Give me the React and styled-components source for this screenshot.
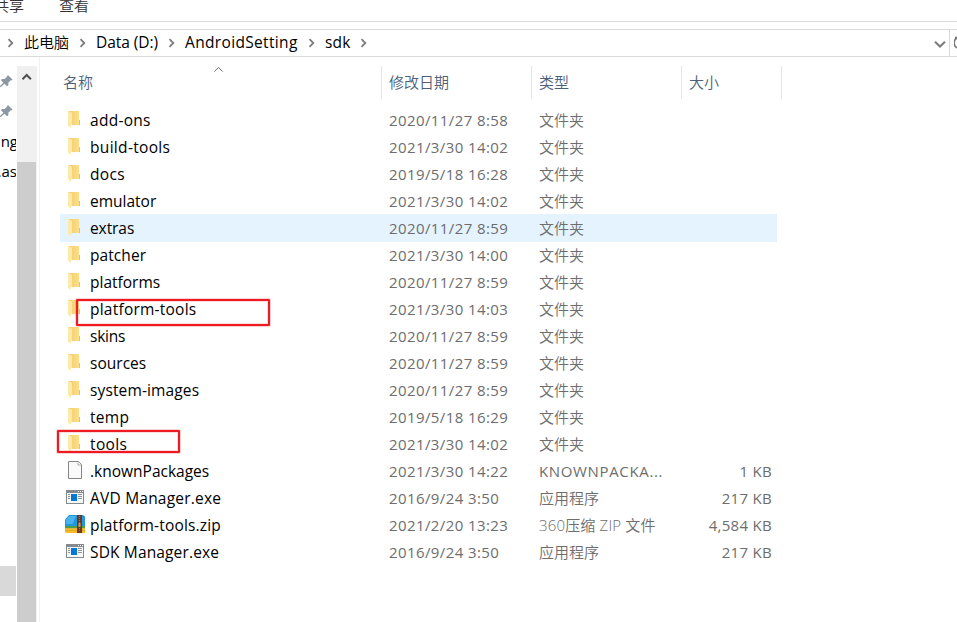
import React from "react";
import styled, { createGlobalStyle } from "styled-components";

const GlobalStyle = createGlobalStyle`
  * { box-sizing: border-box; }
  body {
    margin: 0;
    background: #fff;
    overflow: hidden;
    font-family: "Open Sans", "Noto Sans CJK SC", sans-serif;
    font-size: 15px;
    color: #000;
  }
  svg { display: block; flex: none; }
`;

const Window = styled.div`
  width: 957px;
  height: 622px;
  display: flex;
  flex-direction: column;
  overflow: hidden;
`;

const RibbonTabs = styled.div`
  height: 22px;
  flex: none;
  display: flex;
  gap: 35px;
  margin-left: -6px;
  line-height: 22px;
  color: #333;
  border-bottom: 1px solid #dadada;
`;

const RibbonTab = styled.span`
  margin-top: -6px;
  font-weight: 350;
`;

const AddressBar = styled.div`
  height: 28px;
  flex: none;
  margin-top: 7px;
  display: flex;
  border: solid #d9d9d9;
  border-width: 1px 0;
`;

const Path = styled.div`
  flex: 1;
  display: flex;
  align-items: center;
  padding-left: 7px;
  padding-right: 3px;
`;

const Crumb = styled.span`
  width: ${(p) => p.$width}px;
  line-height: 24px;
  padding-bottom: 2px;
  white-space: nowrap;
  font-size: ${(p) => (p.$latin ? 15.5 : 15)}px;
  font-weight: ${(p) => (p.$latin ? 400 : 350)};
  letter-spacing: ${(p) => p.$spacing || 0}px;
`;

const Separator = styled.span`
  width: ${(p) => p.$width || 26}px;
  flex: none;
  display: flex;
  padding-left: ${(p) => (p.$width ? 0 : 9)}px;
`;

const Spacer = styled.div`
  flex: 1;
`;

const DropButton = styled.div`
  padding-top: 2px;
`;

const RefreshButton = styled.div`
  width: 8px;
  flex: none;
  overflow: hidden;
  display: flex;
  align-items: center;
  padding-left: 4px;
  border-left: 1px solid #d9d9d9;
`;

const Body = styled.div`
  flex: 1;
  min-height: 0;
  display: flex;
`;

const NavPane = styled.div`
  width: 17px;
  flex: none;
  display: flex;
  flex-direction: column;
  padding-top: 9px;
`;

const NavItem = styled.div`
  height: 30px;
  flex: none;
  width: 16px;
  overflow: hidden;
  display: flex;
  align-items: center;
  justify-content: flex-end;
  white-space: nowrap;
`;

const NavText = styled.span`
  flex: none;
  margin-right: ${(p) => p.$cut || 0}px;
`;

const SelectedNavItem = styled.div`
  width: 16px;
  height: 30px;
  margin-top: 380px;
  flex: none;
  background: #d9d9d9;
`;

const Scrollbar = styled.div`
  width: 20px;
  flex: none;
  margin-top: 9px;
  background: #f0f0f0;
  display: flex;
  flex-direction: column;
`;

const ScrollUp = styled.div`
  height: 96px;
  flex: none;
  padding: 6px 0 0 4px;
`;

const ScrollThumb = styled.div`
  width: 19px;
  flex: 1;
  background: #cdcdcd;
`;

const FilePane = styled.div`
  flex: 1;
  margin-left: 2px;
  border-left: 1px solid #f1f1f1;
  padding: 9px 0 0 20px;
  position: relative;
`;

const HeaderRow = styled.div`
  height: 33px;
  display: grid;
  grid-template-columns: 322px 150px 150px 100px;
  color: #4c607a;
`;

const HeaderCell = styled.div`
  border-right: 1px solid #e5e5e5;
  padding-left: ${(p) => (p.$first ? 3 : 7)}px;
  line-height: 32px;
  position: relative;
  font-weight: 350;
`;

const SortMark = styled.span`
  position: absolute;
  left: 154px;
  top: 0;
`;

const FileList = styled.div`
  padding-top: 7px;
  width: 717px;
`;

const FileRow = styled.div`
  height: 27px;
  display: grid;
  grid-template-columns: 30px 299px 150px 130px 103px;
  color: #6d6d6d;
  line-height: 28px;
  white-space: nowrap;
  background: ${(p) => (p.$hover ? "#e5f3ff" : "transparent")};
  box-shadow: ${(p) => (p.$hover ? "0 1px 0 #e5f3ff" : "none")};
`;

const IconCell = styled.span`
  padding: 4px 0 0 4px;
`;

const NameCell = styled.span`
  font-size: 15.5px;
  color: #000;
  letter-spacing: ${(p) => p.$spacing}px;
`;

const Cell = styled.span`
  font-weight: ${(p) => (p.$cjk ? 350 : 400)};
  letter-spacing: ${(p) => p.$spacing || 0}px;
`;

const SizeCell = styled(Cell)`
  text-align: right;
`;

const HighlightBox = styled.div`
  position: absolute;
  left: ${(p) => p.$x}px;
  top: ${(p) => p.$y}px;
  width: ${(p) => p.$w}px;
  height: ${(p) => p.$h}px;
  border: 2px solid #ed1c24;
  border-radius: 1px;
  box-shadow: 0 0 0 1px rgba(237, 28, 36, 0.2), inset 0 0 0 1px rgba(237, 28, 36, 0.15);
`;

const ChevronRight = () => (
  <svg width="8" height="10" viewBox="0 0 8 10" fill="none" stroke="#7d7d7d" strokeWidth="1.8">
    <path d="M1.5 1.2 5.3 5 1.5 8.8" />
  </svg>
);

const ChevronDown = () => (
  <svg width="12" height="10" viewBox="0 0 12 10" fill="none" stroke="#7d7d7d" strokeWidth="2.1">
    <path d="M1 2.8 6 7.6 11 2.8" />
  </svg>
);

const RefreshIcon = () => (
  <svg width="14" height="14" viewBox="0 0 14 14" fill="none" stroke="#777" strokeWidth="1.7">
    <path d="M2.8 2.2A5.6 5.6 0 0 0 4 12.3M1 1.6h3.2v3" />
  </svg>
);

const Pin = () => (
  <svg width="14" height="14" viewBox="0 0 14 14">
    <path d="M8.7.8 13 5.1l-1.1.8-.6-.2-2.5 2.5.1 2.2-1.3 1.4L4.8 9.2 1.2 12.7.3 11.8l3.6-3.6L1.3 5.6l1.4-1.2 2.4.1 2.5-2.4-.1-.6z" transform="translate(.5 .5)" fill="#8c98a3" />
  </svg>
);

const FolderIcon = () => (
  <svg width="20" height="20" viewBox="0 0 20 20">
    <defs>
      <linearGradient id="folderBack" x1="0" x2="1">
        <stop offset="0" stopColor="#efcb6c" />
        <stop offset="1" stopColor="#ffe08a" />
      </linearGradient>
    </defs>
    <path d="M4 1h11v9h1v5H7z" fill="url(#folderBack)" />
    <path d="M15 10h1v5h-1z" fill="#e9c25d" />
    <path d="M4 1l4 1.7v11.8l-1 .7v2.8L4 15.6z" fill="#ffe9a6" />
  </svg>
);

const FileIcon = () => (
  <svg width="20" height="20" viewBox="0 0 20 20">
    <path d="M4.5.5h10l3 3v14h-13z" fill="#fafafa" stroke="#858585" />
    <path d="M14 .5V4h3.5" fill="#fff" stroke="#9a9a9a" strokeWidth=".8" />
  </svg>
);

const ExeIcon = () => (
  <svg width="20" height="20" viewBox="0 0 20 20">
    <path d="M2 2h18v14H2z" fill="#858a8e" />
    <path d="M3 5h16v10H3z" fill="#f5f7f8" />
    <path d="M14 3h1v1h-1zM16 3h1v1h-1zM18 3h1v1h-1z" fill="#fff" />
    <path d="M7 6h6v7H7z" fill="#0078d7" />
    <path d="M4 6h2v1H4zM4 8h2v1H4zM4 10h2v1H4zM14 6h4v1h-4zM14 8h4v1h-4zM14 10h4v1h-4z" fill="#8f9498" />
  </svg>
);

const ZipIcon = () => (
  <svg width="21" height="20" viewBox="0 0 21 20">
    <path d="M1 10h20v8H2L1 17z" fill="#f8bd2c" />
    <path d="M1 10h20v3.2H1z" fill="#4f9d4a" />
    <path d="M1 15.6h20" stroke="#e59a17" strokeWidth=".8" />
    <path d="M5 0h14l2 1.5V11H1V4.5z" fill="#1f98dc" />
    <path d="M5.3 1H12L8.5 9H2V4.6z" fill="#4ab3ee" />
    <path d="M13 0h5v18h-5z" fill="#6a3a22" />
    <path d="M15.5 1v7M15.5 13v4" stroke="#a67a50" strokeDasharray="1 1" />
    <path d="M14.5 8h2v4h-2z" fill="#d69a4a" />
  </svg>
);

const icons = { folder: FolderIcon, file: FileIcon, exe: ExeIcon, zip: ZipIcon };

const FOLDER = "文件夹";
const files = [
  { name: "add-ons", ls: 0.27, date: "2020/11/27 8:58" },
  { name: "build-tools", ls: 0.32, date: "2021/3/30 14:02" },
  { name: "docs", ls: 0.3, date: "2019/5/18 16:28" },
  { name: "emulator", ls: 0, date: "2021/3/30 14:02" },
  { name: "extras", ls: -0.08, date: "2020/11/27 8:59", hover: true },
  { name: "patcher", ls: 0.08, date: "2021/3/30 14:00" },
  { name: "platforms", ls: 0, date: "2020/11/27 8:59" },
  { name: "platform-tools", ls: 0.23, date: "2021/3/30 14:03" },
  { name: "skins", ls: -0.25, date: "2020/11/27 8:59" },
  { name: "sources", ls: 0.02, date: "2020/11/27 8:59" },
  { name: "system-images", ls: 0.13, date: "2020/11/27 8:59" },
  { name: "temp", ls: 0.27, date: "2019/5/18 16:29" },
  { name: "tools", ls: 0.37, date: "2021/3/30 14:02" },
  { name: ".knownPackages", ls: 0, date: "2021/3/30 14:22", icon: "file", type: "KNOWNPACKA...", typeLs: 0.65, size: "1 KB" },
  { name: "AVD Manager.exe", ls: 0.21, date: "2016/9/24 3:50", icon: "exe", type: "应用程序", size: "217 KB" },
  { name: "platform-tools.zip", ls: 0.17, date: "2021/2/20 13:23", icon: "zip", type: "360压缩 ZIP 文件", typeLs: 0.17, size: "4,584 KB" },
  { name: "SDK Manager.exe", ls: 0.14, date: "2016/9/24 3:50", icon: "exe", type: "应用程序", size: "217 KB" },
];

function File({ file }) {
  const Icon = icons[file.icon || "folder"];
  return (
    <FileRow $hover={file.hover}>
      <IconCell><Icon /></IconCell>
      <NameCell $spacing={file.ls}>{file.name}</NameCell>
      <Cell $spacing={0.4}>{file.date}</Cell>
      <Cell $cjk={file.icon !== "file"} $spacing={file.typeLs}>{file.type || FOLDER}</Cell>
      <SizeCell $spacing={0.3}>{file.size}</SizeCell>
    </FileRow>
  );
}

export default function App() {
  return (
    <Window>
      <GlobalStyle />
      <RibbonTabs>
        <RibbonTab>共享</RibbonTab>
        <RibbonTab>查看</RibbonTab>
      </RibbonTabs>
      <AddressBar>
        <Path>
          <Separator $width={17}><ChevronRight /></Separator>
          <Crumb $width={46}>此电脑</Crumb>
          <Separator><ChevronRight /></Separator>
          <Crumb $latin $width={63} $spacing={-0.05}>Data (D:)</Crumb>
          <Separator><ChevronRight /></Separator>
          <Crumb $latin $width={114} $spacing={0.34}>AndroidSetting</Crumb>
          <Separator><ChevronRight /></Separator>
          <Crumb $latin $width={26} $spacing={0.2}>sdk</Crumb>
          <Separator><ChevronRight /></Separator>
          <Spacer />
          <DropButton><ChevronDown /></DropButton>
        </Path>
        <RefreshButton><RefreshIcon /></RefreshButton>
      </AddressBar>
      <Body>
        <NavPane>
          <NavItem><NavText $cut={3}><Pin /></NavText></NavItem>
          <NavItem><NavText $cut={3}><Pin /></NavText></NavItem>
          <NavItem><NavText $cut={-2}>ng</NavText></NavItem>
          <NavItem><NavText $cut={-1}>.as</NavText></NavItem>
          <SelectedNavItem />
        </NavPane>
        <Scrollbar>
          <ScrollUp>
            <svg width="12" height="10" viewBox="0 0 12 10" fill="none" stroke="#505050" strokeWidth="2">
              <path d="M1.5 7.2 5.7 3 9.9 7.2" />
            </svg>
          </ScrollUp>
          <ScrollThumb />
        </Scrollbar>
        <FilePane>
          <HeaderRow>
            <HeaderCell $first>
              名称
              <SortMark>
                <svg width="10" height="7" viewBox="0 0 10 7" fill="none" stroke="#6a6a6a">
                  <path d="M.3 5.6 4.5 1.4 8.7 5.6" />
                </svg>
              </SortMark>
            </HeaderCell>
            <HeaderCell>修改日期</HeaderCell>
            <HeaderCell>类型</HeaderCell>
            <HeaderCell>大小</HeaderCell>
          </HeaderRow>
          <FileList>
            {files.map((file) => <File key={file.name} file={file} />)}
          </FileList>
          <HighlightBox $x={36} $y={242} $w={194} $h={27} />
          <HighlightBox $x={17} $y={373} $w={123} $h={23} />
        </FilePane>
      </Body>
    </Window>
  );
}
